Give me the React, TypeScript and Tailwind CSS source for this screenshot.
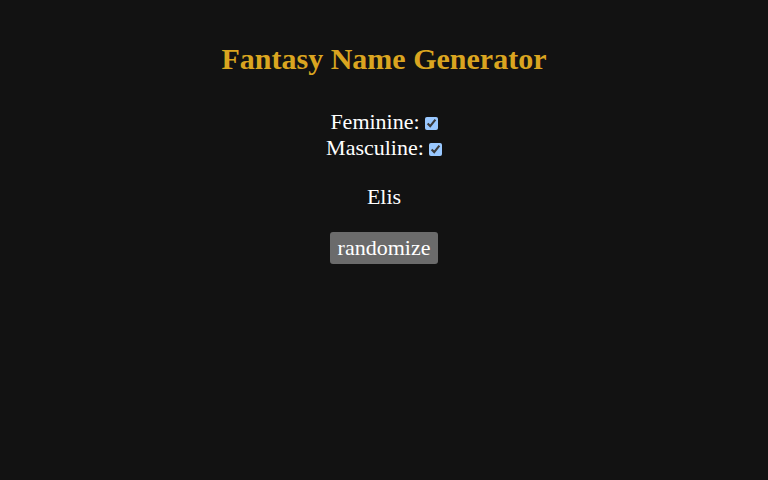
import { useState } from "react";

const names = ["Elis", "Aerin", "Thalor", "Mira", "Kael", "Sylva", "Doran", "Elowen"];

export default function App() {
  const [fem, setFem] = useState(true);
  const [masc, setMasc] = useState(true);
  const [name, setName] = useState("Elis");

  return (
    <main className="min-h-screen bg-[#121212] text-white font-['Liberation_Serif',serif] flex flex-col items-center [color-scheme:dark]">
      <h1 className="mt-[40px] text-[30px] leading-[38px] font-bold text-[#daa520]">Fantasy Name Generator</h1>
      <div className="mt-[31px] flex flex-col items-center text-[22px] leading-[26px]">
        <label className="flex items-center">
          Feminine:
          <input type="checkbox" checked={fem} onChange={() => setFem(!fem)} className="ml-[5px] mt-[2px] w-[13px] h-[13px]" />
        </label>
        <label className="flex items-center">
          Masculine:
          <input type="checkbox" checked={masc} onChange={() => setMasc(!masc)} className="ml-[5px] mt-[2px] w-[13px] h-[13px]" />
        </label>
      </div>
      <p className="mt-[23px] text-[22px] leading-[26px]">{name}</p>
      <button
        onClick={() => setName(names[Math.floor(Math.random() * names.length)])}
        className="mt-[22px] bg-[#6b6b6b] rounded-[3px] px-[8px] h-[32px] text-[22px] leading-[26px] text-white"
      >
        randomize
      </button>
    </main>
  );
}
